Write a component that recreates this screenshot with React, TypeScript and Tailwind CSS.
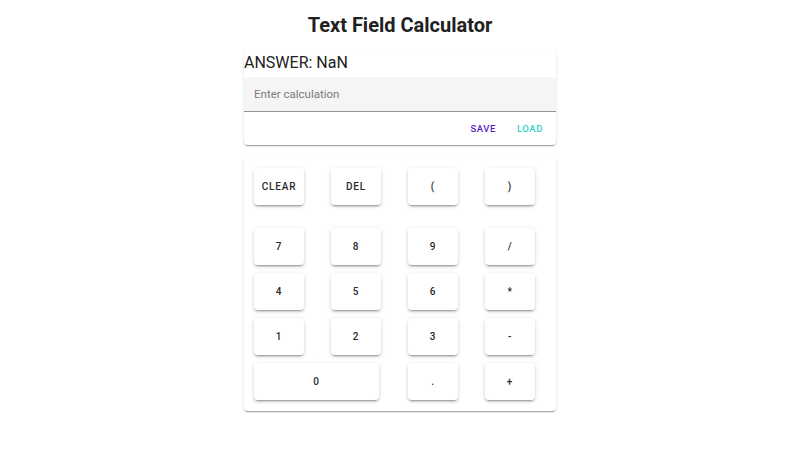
import React from "react";

const rows: string[][] = [
  ["7", "8", "9", "/"],
  ["4", "5", "6", "*"],
  ["1", "2", "3", "-"],
];

const KeyButton: React.FC<{ label: string; wide?: boolean }> = ({ label, wide }) => (
  <button
    className={
      "h-[37px] rounded-[4px] bg-white text-[10px] font-medium tracking-[0.08em] text-[#2a2a2a] shadow-[0_3px_1px_-2px_rgba(0,0,0,0.2),0_2px_2px_0_rgba(0,0,0,0.14),0_1px_5px_0_rgba(0,0,0,0.12)] " +
      (wide ? "col-span-2 w-[125px]" : "w-[50px]")
    }
  >
    {label}
  </button>
);

export default function App() {
  return (
    <div className="min-h-[450px] bg-white font-['Roboto',sans-serif] text-[#212121]">
      <div className="mx-auto w-[312px] pt-[11px]">
        <h1 className="text-center text-[20px] font-bold leading-[28px]">Text Field Calculator</h1>

        {/* input card */}
        <div className="mt-[13px] rounded-[4px] bg-white shadow-[0_2px_1px_-1px_rgba(0,0,0,0.2),0_1px_1px_0_rgba(0,0,0,0.14),0_1px_3px_0_rgba(0,0,0,0.12)]">
          <div className="h-[25px] text-[16px] leading-[21px]">ANSWER: NaN</div>
          <div className="flex h-[35px] items-center rounded-t-[4px] border-b border-[#949494] bg-[#f5f5f5] px-[10px] pt-[2px]">
            <input
              placeholder="Enter calculation"
              className="w-full bg-transparent text-[11.5px] outline-none placeholder:text-[#7a7a7a]"
            />
          </div>
          <div className="flex h-[33px] items-center justify-end gap-[21px] pr-[13px] pt-[2px]">
            <button className="text-[9.5px] font-medium tracking-[0.06em] text-[#5b1bc4]">SAVE</button>
            <button className="text-[9.5px] font-medium tracking-[0.06em] text-[#2fd3c3]">LOAD</button>
          </div>
        </div>

        {/* keypad card */}
        <div className="mt-[12px] rounded-[4px] bg-white px-[10px] pb-[11px] pt-[11px] shadow-[0_2px_1px_-1px_rgba(0,0,0,0.2),0_1px_1px_0_rgba(0,0,0,0.14),0_1px_3px_0_rgba(0,0,0,0.12)]">
          <div className="grid grid-cols-[50px_50px_50px_50px] gap-x-[27px]">
            {["CLEAR", "DEL", "(", ")"].map((k) => (
              <KeyButton key={k} label={k} />
            ))}
          </div>
          <div className="mt-[23px] grid grid-cols-[50px_50px_50px_50px] gap-x-[27px] gap-y-[8px]">
            {rows.map((r) => r.map((k) => <KeyButton key={k} label={k} />))}
            <KeyButton label="0" wide />
            <KeyButton label="." />
            <KeyButton label="+" />
          </div>
        </div>
      </div>
    </div>
  );
}
